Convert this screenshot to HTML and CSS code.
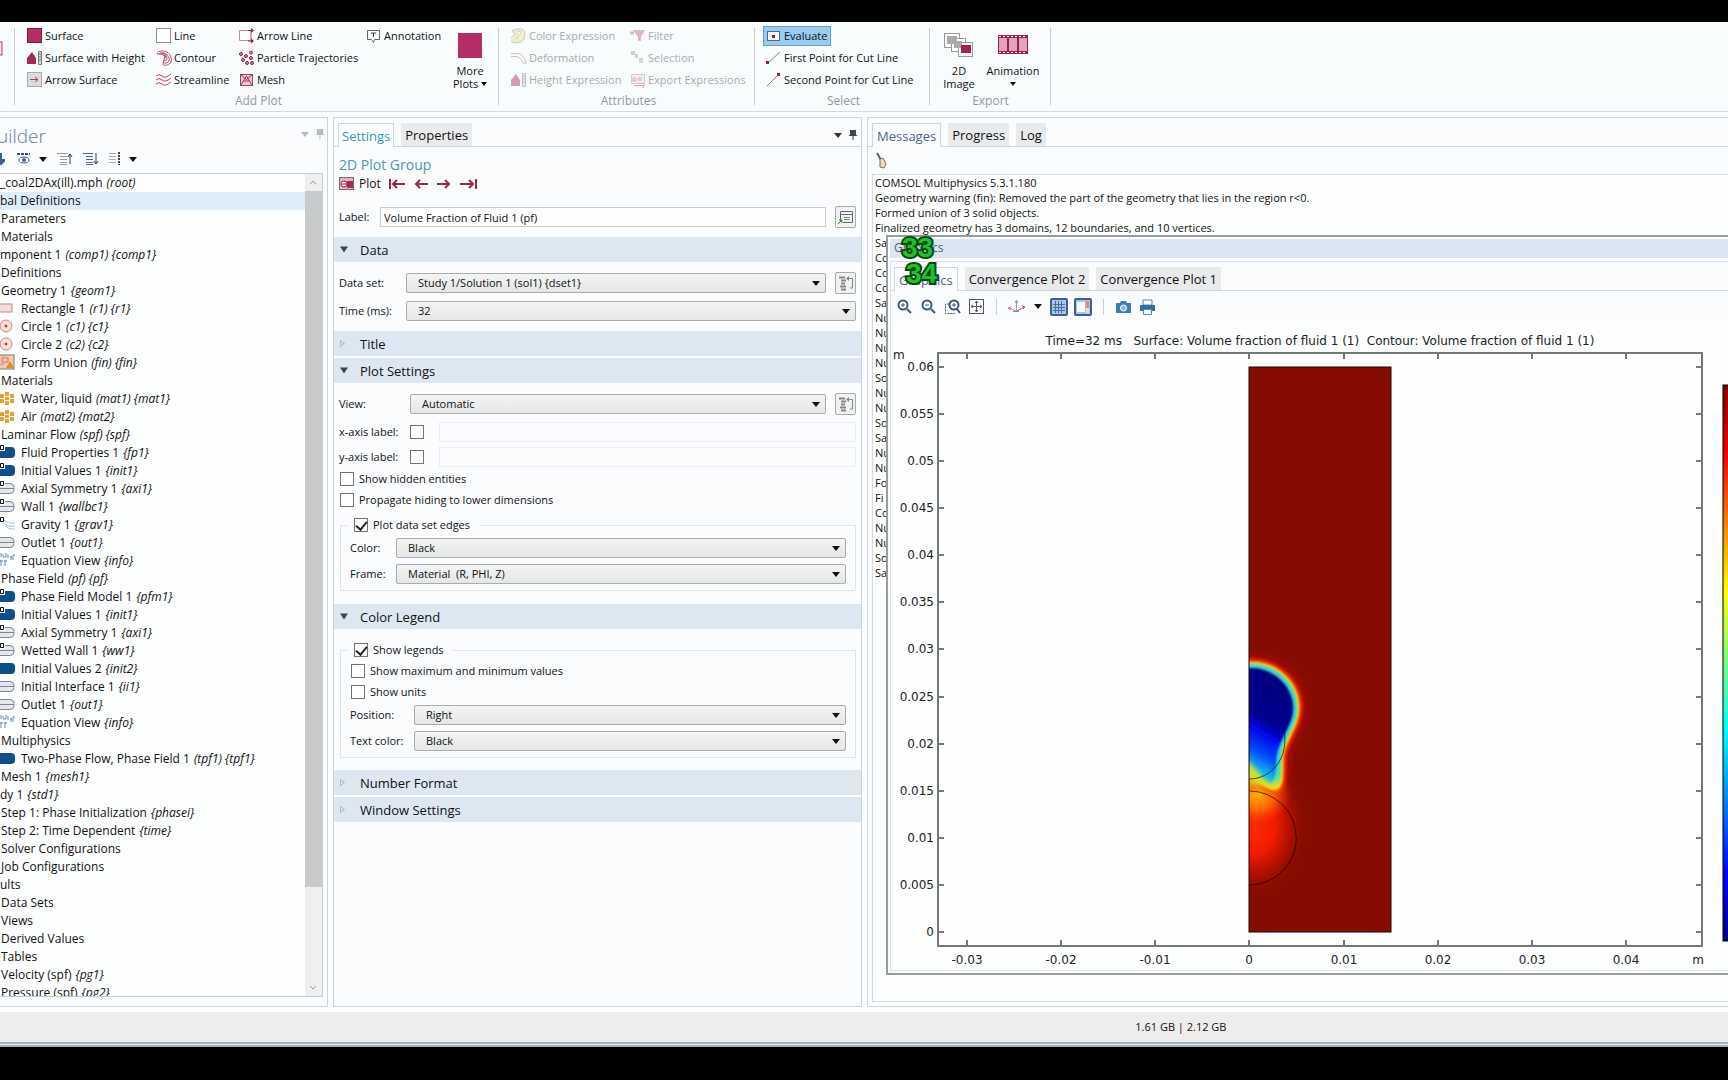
FILE: index.html
```
<!DOCTYPE html>
<html lang="en">
<head>
    <meta charset="utf-8">
    <title>COMSOL Multiphysics</title>
    <link rel="stylesheet" href="styles.css">
</head>
<body>
    <!-- Shared icons -->
    <svg class="defs" width="0" height="0" aria-hidden="true">
        <symbol id="i-dom" viewBox="0 0 16 16"><rect x="-5" y="3" width="20" height="11" rx="4" fill="#0f4f8c"/></symbol>
        <symbol id="i-domd" viewBox="0 0 16 16"><rect x="-5" y="3" width="20" height="11" rx="4" fill="#0f4f8c"/><rect x="-1" y="0" width="6" height="7" fill="#fff"/><path d="M.5 1.500h3v4h-3z" fill="none" stroke="#111"/></symbol>
        <symbol id="i-bnd" viewBox="0 0 16 16"><rect x="-5" y="3.500" width="19" height="10" rx="4" fill="#e6e7ec" stroke="#80858f"/><path d="M0 8.500h14" stroke="#80858f"/></symbol>
        <symbol id="i-bndd" viewBox="0 0 16 16"><rect x="-5" y="3.500" width="19" height="10" rx="4" fill="#e6e7ec" stroke="#80858f"/><path d="M0 8.500h14" stroke="#80858f"/><rect x="-1" y="0" width="6" height="7" fill="#fff"/><path d="M.5 1.500h3v4h-3z" fill="none" stroke="#111"/></symbol>
        <symbol id="i-grav" viewBox="0 0 16 16"><path d="M4 4q4 4 11 3M3 7q4 4 12 3M5 10q4 4 10 3" fill="none" stroke="#a8bfe6"/><path d="M.5 1.500h3v4h-3z" fill="none" stroke="#111"/></symbol>
        <symbol id="i-eq" viewBox="0 0 16 16"><path d="M1 1v4M3 2v3h3v-4M8 2v4M11 8v-4M10 5h2M13 8v-5h2M0 9h3M1 8v6M5 8v6M4 9h3" fill="none" stroke="#6d8cb4"/></symbol>
        <symbol id="i-circ" viewBox="0 0 16 16"><circle cx="6" cy="8" r="6" fill="#f7dcd8" stroke="#c38983"/><circle cx="6" cy="8" r="1" fill="#a03c34" stroke="#a03c34"/></symbol>
        <symbol id="i-mat" viewBox="0 0 16 16"><path d="M0 4h4v4h-4zM0 9h4v4h-4zM5 2h4v4h-4zM5 7h4v3h-4zM5 11h4v4h-4zM10 4h4v4h-4zM10 9h4v4h-4z" fill="#e3a137"/></symbol>
        <symbol id="i-height" viewBox="0 0 16 16"><path d="M5 2L9 8V14H0V8z" fill="#a32b58"/><path d="M11.500 1.500h3v13h-3z" fill="#ddd" stroke="#777"/><path d="M12 4h2M12 7h2M12 10h2" stroke="#777"/></symbol>
        <symbol id="i-goto" viewBox="0 0 16 16"><path d="M1 2.500h6M3 5.500h5M3 8.500h4M2 11.500h6M3 14.500h5" stroke="#858585" stroke-width="2"/><path d="M9 3.500h5.500V13H12" fill="none" stroke="#858585"/><path d="M8 3.500l3-2.500v5z" fill="#858585"/></symbol>
        <symbol id="i-pin" viewBox="0 0 10 12"><path d="M2 1h6v5h1v1h-3.500v4h-1v-4H1v-1h1z" fill="currentColor"/></symbol>
    </svg>

    <header class="ribbon">
        <div class="group edge">
            <svg width="4" height="16"><rect x="-5" y="1" width="7" height="13" fill="#f6e3ea" stroke="#a05068"/></svg>
        </div>

        <div class="group add-plot">
            <div class="tools">
                <div class="tool-col">
                    <button><svg width="16" height="16"><rect x=".5" y=".5" width="14" height="14" fill="#b52d67" stroke="#6d2040"/></svg>Surface</button>
                    <button><svg width="16" height="16"><use href="#i-height"/></svg>Surface with Height</button>
                    <button><svg width="16" height="16"><rect x=".5" y=".5" width="14" height="14" fill="#dcdce0" stroke="#aaa"/><path d="M3 7.500h8M8 5l3 2.500-3 2.500" fill="none" stroke="#b0355f"/></svg>Arrow Surface</button>
                </div>
                <div class="tool-col">
                    <button><svg width="16" height="16"><rect x=".5" y=".5" width="14" height="14" fill="#fff" stroke="#9a8a94"/></svg>Line</button>
                    <button><svg width="16" height="16" fill="none" stroke="#c0527a"><path d="M1 4q0-3 6-3t8 6-4 8-3-5-7-6z"/><path d="M3 4q1-2 5-1t5 5-3 5-1-5-6-4z"/><path d="M7 5q4 0 4 3t-2 3"/></svg>Contour</button>
                    <button><svg width="16" height="16" fill="none" stroke="#b8446c"><path d="M0 4q3-3 6 0t9-2M0 8q3-3 6 0t9-2M0 12q3-3 6 0t9-2"/></svg>Streamline</button>
                </div>
                <div class="tool-col">
                    <button><svg width="16" height="16"><path d="M12 2.500H.5v10H12z" fill="#fff" stroke="#c58aa0"/><path d="M12 3v10" stroke="#c58aa0"/><path d="M9 2.500h4M9 13h4" stroke="#8d2048"/><path d="M12 0l3 2.500-3 2.500zM12 10.500l3 2.500-3 2.500z" fill="#8d2048"/></svg>Arrow Line</button>
                    <button><svg width="16" height="16" fill="#d88ca8" stroke="#8d2048"><circle cx="2" cy="4" r="1.500"/><circle cx="7" cy="6" r="1.500"/><circle cx="12" cy="2.500" r="1.500"/><circle cx="4" cy="10" r="1.500"/><circle cx="12" cy="8" r="1.500"/><circle cx="8" cy="13" r="1.500"/><circle cx="13" cy="13" r="1.500"/></svg>Particle Trajectories</button>
                    <button><svg width="16" height="16"><rect x="1.500" y="2.500" width="12" height="11" fill="#ecc8d4" stroke="#8a4a62"/><path d="M2 3l5.500 4.500L13 3M2 13l5.500-9L13 13M4 9h7" fill="none" stroke="#b0355f"/></svg>Mesh</button>
                </div>
                <div class="tool-col">
                    <button><svg width="16" height="16"><path d="M1.500 2.500h12v9h-5l-1 3-2-3h-4z" fill="#fff" stroke="#666"/><path d="M5 5h5M7.500 5v4" stroke="#444"/></svg>Annotation</button>
                </div>
                <button class="big">
                    <svg width="24" height="25"><rect width="24" height="25" fill="#b52d67"/></svg>
                    <span>More<br>Plots <i class="caret"></i></span>
                </button>
            </div>
            <h3>Add Plot</h3>
        </div>

        <div class="group attributes">
            <div class="tools">
                <div class="tool-col">
                    <button disabled><svg width="16" height="16"><path d="M7 1q7-1 7 5t-4 8-9 0 0-5 1-5 5-3z" fill="#eadf8f" stroke="#888"/><circle cx="8" cy="5" r="2" fill="#fff" stroke="#999"/><circle cx="6" cy="10" r="1.500" fill="#b9c76a"/></svg>Color Expression</button>
                    <button disabled><svg width="16" height="16" fill="none" stroke="#b06a85"><path d="M0 3.500h8q4 1 7 8M0 6.500h6q4 1 6 6l3 1v-3"/></svg>Deformation</button>
                    <button disabled><svg width="16" height="16"><use href="#i-height"/></svg>Height Expression</button>
                </div>
                <div class="tool-col">
                    <button disabled><svg width="16" height="16"><path d="M0 5h4" stroke="#888" stroke-width="3"/><path d="M3 2h12l-4 7v4H8V9z" fill="#b86a86"/></svg>Filter</button>
                    <button disabled><svg width="16" height="16" fill="#999"><path d="M1 1h4v4h-4zM5 4h3v4H5zM9 8h4v5H9z"/><path d="M9 9h4v4H9z" fill="#d5a0b4"/></svg>Selection</button>
                    <button disabled><svg width="16" height="16"><path d="M1.500 2.500h13v9h-13z" fill="#f3dfe6" stroke="#999"/><path d="M3 6h3v3H3zM8 6h4M8 8h4" fill="none" stroke="#a0506c"/><path d="M4 13.500h10M12 11l3 2.500-3 2.500" fill="none" stroke="#a0506c"/></svg>Export Expressions</button>
                </div>
            </div>
            <h3>Attributes</h3>
        </div>

        <div class="group select">
            <div class="tools">
                <div class="tool-col">
                    <button class="active"><svg width="16" height="16"><rect x="1.500" y="3.500" width="12" height="9" fill="#f4f8ff" stroke="#4c6680"/><rect x="6" y="7" width="3" height="3" fill="#8d2048"/></svg>Evaluate</button>
                    <button><svg width="16" height="16"><path d="M2 13L14 2" stroke="#888"/><rect x="0" y="11" width="3" height="3" fill="#8d2048"/></svg>First Point for Cut Line</button>
                    <button><svg width="16" height="16"><path d="M1 14L12 3" stroke="#888"/><rect x="11" y="1" width="3" height="3" fill="#8d2048"/></svg>Second Point for Cut Line</button>
                </div>
            </div>
            <h3>Select</h3>
        </div>

        <div class="group export">
            <div class="tools">
                <button class="big">
                    <svg width="30" height="25"><g fill="#fff" stroke="#999"><rect x=".5" y=".5" width="15" height="14"/><rect x="7.500" y="5.500" width="14" height="13"/><rect x="14.500" y="9.500" width="14" height="14"/></g><path d="M3 3h10v8H3zM10 8h8v7h-8z" fill="#aaa"/><path d="M17 12h10v8H17z" fill="#a32055"/></svg>
                    <span>2D<br>Image</span>
                </button>
                <button class="big">
                    <svg width="30" height="25"><rect y="2" width="30" height="19" fill="#96224f"/><path d="M1 5h8v13H1zM11 5h8v13h-8zM21 5h8v13h-8z" fill="#e3a3bb"/><path d="M1 3.500h28M1 19.500h28" stroke="#fff" stroke-dasharray="2 2"/></svg>
                    <span>Animation<br><i class="caret"></i></span>
                </button>
            </div>
            <h3>Export</h3>
        </div>
    </header>

    <main>
        <!-- Model tree -->
        <section class="panel tree-panel">
            <div class="tree-head">
                <h2>uilder</h2>
                <div class="pins"><i class="caret"></i><svg width="10" height="12"><use href="#i-pin"/></svg></div>
            </div>
            <div class="tree-tools">
                <svg class="down" width="5" height="14"><path d="M1 1v9M-3 8l4 4 4-4z" fill="#3d6289" stroke="#3d6289" stroke-width="2"/></svg>
                <svg width="14" height="14"><path d="M0 2h13" stroke="#446" stroke-dasharray="3 1" stroke-width="2"/><ellipse cx="7" cy="8" rx="5" ry="3" fill="#fff" stroke="#3f6389"/><circle cx="7" cy="8" r="2" fill="#3f6389"/></svg>
                <i class="caret"></i>
                <svg width="16" height="14"><path d="M0 1.500h10M3 4.500h7M3 7.500h7M3 10.500h7M3 12.500h7" stroke="#999"/><path d="M13 12V2M11 5l2-3 2 3" fill="none" stroke="#345"/></svg>
                <svg width="16" height="14"><path d="M0 1.500h10M3 4.500h7M3 7.500h7M3 10.500h7M3 12.500h7" stroke="#4a6a8a"/><path d="M13 1v11M11 9l2 3 2-3" fill="none" stroke="#345"/></svg>
                <svg width="12" height="14"><path d="M0 1.500h7M0 4.500h7M0 7.500h7M0 10.500h7" stroke="#aaa"/><path d="M10 0v13" stroke="#444" stroke-dasharray="2 1" stroke-width="2"/></svg>
                <i class="caret"></i>
            </div>
            <div class="tree-box">
                <ul class="tree">
                    <li class="cut">_coal2DAx(ill).mph <em>(root)</em></li>
                    <li class="cut selected">bal Definitions</li>
                    <li>Parameters</li>
                    <li>Materials</li>
                    <li class="cut">mponent 1 <em>(comp1) {comp1}</em></li>
                    <li>Definitions</li>
                    <li>Geometry 1 <em>{geom1}</em></li>
                    <li class="leaf"><svg><rect x="-3" y="4" width="15" height="8" fill="#f3dede" stroke="#c08a8a"/></svg>Rectangle 1 <em>(r1) {r1}</em></li>
                    <li class="leaf"><svg><use href="#i-circ"/></svg>Circle 1 <em>(c1) {c1}</em></li>
                    <li class="leaf"><svg><use href="#i-circ"/></svg>Circle 2 <em>(c2) {c2}</em></li>
                    <li class="leaf"><svg><rect x="-3" y="1" width="17" height="14" fill="#f6c6b4" stroke="#6a8a6a"/><path d="M2 4h6v4H2zM0 10h4" fill="none" stroke="#d07860"/><path d="M10 7l4 7H6z" fill="#e08a2a"/></svg>Form Union <em>(fin) {fin}</em></li>
                    <li>Materials</li>
                    <li class="leaf"><svg><use href="#i-mat"/></svg>Water, liquid <em>(mat1) {mat1}</em></li>
                    <li class="leaf"><svg><use href="#i-mat"/></svg>Air <em>(mat2) {mat2}</em></li>
                    <li>Laminar Flow <em>(spf) {spf}</em></li>
                    <li class="leaf"><svg><use href="#i-domd"/></svg>Fluid Properties 1 <em>{fp1}</em></li>
                    <li class="leaf"><svg><use href="#i-domd"/></svg>Initial Values 1 <em>{init1}</em></li>
                    <li class="leaf"><svg><use href="#i-bndd"/></svg>Axial Symmetry 1 <em>{axi1}</em></li>
                    <li class="leaf"><svg><use href="#i-bndd"/></svg>Wall 1 <em>{wallbc1}</em></li>
                    <li class="leaf"><svg><use href="#i-grav"/></svg>Gravity 1 <em>{grav1}</em></li>
                    <li class="leaf"><svg><use href="#i-bnd"/></svg>Outlet 1 <em>{out1}</em></li>
                    <li class="leaf"><svg><use href="#i-eq"/></svg>Equation View <em>{info}</em></li>
                    <li>Phase Field <em>(pf) {pf}</em></li>
                    <li class="leaf"><svg><use href="#i-domd"/></svg>Phase Field Model 1 <em>{pfm1}</em></li>
                    <li class="leaf"><svg><use href="#i-domd"/></svg>Initial Values 1 <em>{init1}</em></li>
                    <li class="leaf"><svg><use href="#i-bndd"/></svg>Axial Symmetry 1 <em>{axi1}</em></li>
                    <li class="leaf"><svg><use href="#i-bndd"/></svg>Wetted Wall 1 <em>{ww1}</em></li>
                    <li class="leaf"><svg><use href="#i-dom"/></svg>Initial Values 2 <em>{init2}</em></li>
                    <li class="leaf"><svg><use href="#i-bnd"/></svg>Initial Interface 1 <em>{ii1}</em></li>
                    <li class="leaf"><svg><use href="#i-bnd"/></svg>Outlet 1 <em>{out1}</em></li>
                    <li class="leaf"><svg><use href="#i-eq"/></svg>Equation View <em>{info}</em></li>
                    <li>Multiphysics</li>
                    <li class="leaf"><svg><use href="#i-dom"/></svg>Two-Phase Flow, Phase Field 1 <em>(tpf1) {tpf1}</em></li>
                    <li>Mesh 1 <em>{mesh1}</em></li>
                    <li class="cut">dy 1 <em>{std1}</em></li>
                    <li>Step 1: Phase Initialization <em>{phasei}</em></li>
                    <li>Step 2: Time Dependent <em>{time}</em></li>
                    <li>Solver Configurations</li>
                    <li>Job Configurations</li>
                    <li class="cut">ults</li>
                    <li>Data Sets</li>
                    <li>Views</li>
                    <li>Derived Values</li>
                    <li>Tables</li>
                    <li>Velocity (spf) <em>{pg1}</em></li>
                    <li>Pressure (spf) <em>{pg2}</em></li>
                </ul>
                <div class="scrollbar">
                    <svg width="17" height="17"><path d="M5 10l3-3 3 3" fill="none" stroke="#999"/></svg>
                    <div class="thumb"></div>
                    <svg width="17" height="17"><path d="M5 7l3 3 3-3" fill="none" stroke="#999"/></svg>
                </div>
            </div>
        </section>

        <!-- Settings -->
        <section class="panel settings">
            <div class="tabs">
                <button class="tab current teal">Settings</button>
                <button class="tab">Properties</button>
                <div class="pins dark"><i class="caret"></i><svg width="10" height="12"><use href="#i-pin"/></svg></div>
            </div>
            <h2>2D Plot Group</h2>
            <div class="plot-tools">
                <button><svg width="16" height="14"><rect x=".5" y=".5" width="14" height="12" fill="#e8b4c6" stroke="#7a6a70"/><rect x="8" y="4" width="6" height="7" fill="#a32b58"/><circle cx="5" cy="7" r="3" fill="#fff" stroke="#8d2048"/><path d="M3 7h4" stroke="#8d2048"/></svg>Plot</button>
                <button aria-label="First"><svg class="arrow" width="17" height="10"><path d="M1 0v10M4 5h12M8 1L4 5l4 4"/></svg></button>
                <button aria-label="Previous"><svg class="arrow" width="15" height="10"><path d="M2 5h12M6 1L2 5l4 4"/></svg></button>
                <button aria-label="Next"><svg class="arrow" width="15" height="10"><path d="M0 5h12M8 1l4 4-4 4"/></svg></button>
                <button aria-label="Last"><svg class="arrow" width="17" height="10"><path d="M16 0v10M0 5h12M9 1l4 4-4 4"/></svg></button>
            </div>
            <div class="row label-row">
                <label for="label">Label:</label>
                <input type="text" id="label" value="Volume Fraction of Fluid 1 (pf)">
                <button class="side" aria-label="Rename"><svg width="16" height="16"><path d="M2.500 12V2.500h12v11H5M3 5.500h11" fill="none" stroke="#667"/><path d="M6 8.500h6M6 10.500h6" stroke="#7a9a6a"/><path d="M0 15l4-4M1 11h3v3" fill="none" stroke="#3a7a3a"/></svg></button>
            </div>

            <button class="section open">Data</button>
            <div class="body">
                <div class="row">
                    <label for="dataset" class="w67">Data set:</label>
                    <span class="drop"><select id="dataset"><option>Study 1/Solution 1 (sol1) {dset1}</option></select></span>
                    <button class="side" aria-label="Go to source"><svg width="16" height="16"><use href="#i-goto"/></svg></button>
                </div>
                <div class="row">
                    <label for="time" class="w67">Time (ms):</label>
                    <span class="drop"><select id="time"><option>32</option></select></span>
                </div>
            </div>
            <button class="section">Title</button>
            <button class="section open">Plot Settings</button>
            <div class="body">
                <div class="row">
                    <label for="view" class="w71">View:</label>
                    <span class="drop"><select id="view"><option>Automatic</option></select></span>
                    <button class="side" aria-label="Go to source"><svg width="16" height="16"><use href="#i-goto"/></svg></button>
                </div>
                <div class="row axis">
                    <label for="xaxis" class="w71">x-axis label:</label>
                    <input type="checkbox" id="xaxis"><input type="text" disabled aria-label="x-axis text">
                </div>
                <div class="row axis">
                    <label for="yaxis" class="w71">y-axis label:</label>
                    <input type="checkbox" id="yaxis"><input type="text" disabled aria-label="y-axis text">
                </div>
                <label class="check"><input type="checkbox">Show hidden entities</label>
                <label class="check"><input type="checkbox">Propagate hiding to lower dimensions</label>
                <fieldset>
                    <legend><label class="check"><input type="checkbox" checked>Plot data set edges</label></legend>
                    <div class="row">
                        <label for="color" class="w46">Color:</label>
                        <span class="drop"><select id="color"><option>Black</option></select></span>
                    </div>
                    <div class="row">
                        <label for="frame" class="w46">Frame:</label>
                        <span class="drop"><select id="frame"><option>Material &nbsp;(R, PHI, Z)</option></select></span>
                    </div>
                </fieldset>
            </div>
            <button class="section open">Color Legend</button>
            <div class="body">
                <fieldset>
                    <legend><label class="check"><input type="checkbox" checked>Show legends</label></legend>
                    <label class="check"><input type="checkbox">Show maximum and minimum values</label>
                    <label class="check"><input type="checkbox">Show units</label>
                    <div class="row">
                        <label for="position" class="w64">Position:</label>
                        <span class="drop"><select id="position"><option>Right</option></select></span>
                    </div>
                    <div class="row">
                        <label for="textcolor" class="w64">Text color:</label>
                        <span class="drop"><select id="textcolor"><option>Black</option></select></span>
                    </div>
                </fieldset>
            </div>
            <button class="section">Number Format</button>
            <button class="section">Window Settings</button>
        </section>

        <!-- Messages with the floating graphics window over it -->
        <section class="panel messages">
            <div class="tabs">
                <button class="tab current">Messages</button>
                <button class="tab">Progress</button>
                <button class="tab">Log</button>
            </div>
            <div class="msg-tools">
                <svg width="14" height="18"><path d="M2 1l4 7" stroke="#666" stroke-width="2"/><path d="M5 7l3-1 3 6-2 4-4-1z" fill="#eadfc0" stroke="#776a50"/></svg>
            </div>
            <pre class="log">COMSOL Multiphysics 5.3.1.180
Geometry warning (fin): Removed the part of the geometry that lies in the region r&lt;0.
Formed union of 3 solid objects.
Finalized geometry has 3 domains, 12 boundaries, and 10 vertices.
Sa
Co
Co
Co
Sa
Nu
Nu
Nu
Nu
So
Nu
Nu
So
Sa
Nu
Nu
Fo
Fi
Co
Nu
Nu
So
Sa</pre>

            <div class="window">
                <div class="title">Graphics</div>
                <div class="window-body">
                    <div class="tabs">
                        <button class="tab current">Graphics</button>
                        <button class="tab">Convergence Plot 2</button>
                        <button class="tab">Convergence Plot 1</button>
                    </div>
                    <div class="gfx-tools">
                        <svg width="16" height="16" fill="none" stroke="#3b5878"><circle cx="6" cy="6" r="4.500" stroke-width="2"/><path d="M10 10l4 4" stroke-width="2"/><path d="M4 6h4M6 4v4"/></svg>
                        <svg width="16" height="16" fill="none" stroke="#3b5878"><circle cx="6" cy="6" r="4.500" stroke-width="2"/><path d="M10 10l4 4" stroke-width="2"/><path d="M4 6h4"/></svg>
                        <svg width="16" height="16" fill="none" stroke="#3b5878"><path d="M4 5H.5v9.500H10" stroke-dasharray="2 1"/><circle cx="9" cy="6" r="4.500" stroke-width="2"/><path d="M12 10l3 4" stroke-width="2"/><path d="M7 6h4M9 4v4"/></svg>
                        <svg width="16" height="16" fill="none" stroke="#556"><rect x=".5" y=".5" width="14" height="14"/><path d="M7.500 2v11M2 7.500h11M6 4l1.500-2L9 4M6 11l1.500 2L9 11M4 6L2 7.500 4 9M11 6l2 1.500L11 9"/></svg>
                        <i class="rule"></i>
                        <svg width="18" height="16" fill="none"><path d="M8.500 12V2M7 4l1.500-3L10 4" stroke="#7fa0cc"/><path d="M8 12L1 9M3 8L0 9l2 2" stroke="#c67a86"/><path d="M9 12l7-4M14 7l3 1-2 2" stroke="#c0566a"/><path d="M5 12.500h6" stroke="#889"/></svg>
                        <i class="caret"></i>
                        <svg class="on" width="18" height="18"><rect x="1" y="1" width="16" height="16" rx="1" fill="#a7c4ea" stroke="#3f608a" stroke-width="2"/><path d="M5.500 3v12M8.500 3v12M11.500 3v12M3 6.500h12M3 9.500h12M3 12.500h12" stroke="#4f7098"/></svg>
                        <svg class="on" width="18" height="18"><rect x="1" y="1" width="16" height="16" rx="1" fill="#a7c4ea" stroke="#3f608a" stroke-width="2"/><rect x="3" y="4" width="8" height="10" fill="#f6f8fb"/><path d="M12 3h3v12h-3z" fill="#e08a72"/><path d="M12 10h3v5h-3z" fill="#eedfc0"/></svg>
                        <i class="rule"></i>
                        <svg class="on" width="17" height="16"><path d="M1 4h4l1-2h5l1 2h4v10H1z" fill="#3f7db8"/><circle cx="8.500" cy="9" r="3" fill="#8bb7e0" stroke="#fff"/></svg>
                        <svg width="16" height="16"><path d="M3 1h9v5H3z" fill="#fff" stroke="#5588b8"/><path d="M0 6h15v6H0z" fill="#2f6ca8"/><path d="M3.500 10.500h8v5h-8z" fill="#fff" stroke="#5588b8"/></svg>
                    </div>
                    <svg class="plot" viewBox="0 0 837 648" preserveAspectRatio="xMinYMin slice">
                        <defs>
                            <linearGradient id="bubble" x1=".55" y1="0" x2=".25" y2="1">
                                <stop offset="0" stop-color="#00007c"/>
                                <stop offset=".42" stop-color="#000090"/>
                                <stop offset=".54" stop-color="#0008e8"/>
                                <stop offset=".7" stop-color="#0048ff"/>
                                <stop offset=".86" stop-color="#10b8f0"/>
                                <stop offset="1" stop-color="#60e0a0" stop-opacity="0"/>
                            </linearGradient>
                            <linearGradient id="rim" x1="0" y1="0" x2="0" y2="1">
                                <stop offset=".75" stop-color="#30d8e0"/>
                                <stop offset=".9" stop-color="#50e0b0"/>
                                <stop offset="1" stop-color="#f0e010"/>
                            </linearGradient>
                            <radialGradient id="heat">
                                <stop offset="0" stop-color="#ff2a00"/>
                                <stop offset=".4" stop-color="#f01c00"/>
                                <stop offset=".7" stop-color="#b81000" stop-opacity=".8"/>
                                <stop offset="1" stop-color="#850d00" stop-opacity="0"/>
                            </radialGradient>
                            <radialGradient id="warm">
                                <stop offset="0" stop-color="#ffb000"/>
                                <stop offset=".5" stop-color="#ff7800" stop-opacity=".8"/>
                                <stop offset="1" stop-color="#ff3000" stop-opacity="0"/>
                            </radialGradient>
                            <linearGradient id="jet" x1="0" y1="0" x2="0" y2="1">
                                <stop offset="0" stop-color="#800000"/>
                                <stop offset=".12" stop-color="#f00000"/>
                                <stop offset=".37" stop-color="#ffff00"/>
                                <stop offset=".62" stop-color="#00ffff"/>
                                <stop offset=".88" stop-color="#0000ff"/>
                                <stop offset="1" stop-color="#000080"/>
                            </linearGradient>
                            <filter id="soft" x="-30%" y="-30%" width="160%" height="160%"><feGaussianBlur stdDeviation="6"/></filter>
                            <filter id="softer" x="-30%" y="-30%" width="160%" height="160%"><feGaussianBlur stdDeviation="12"/></filter>
                            <filter id="edge"><feGaussianBlur stdDeviation="3"/></filter>
                            <clipPath id="domain"><rect x="358" y="45" width="142" height="565"/></clipPath>
                            <path id="blob" d="M40 72H95C170 72 232 130 232 205C232 260 188 300 184 350C182 400 188 440 164 445C140 446 120 415 90 405H40z"/>
                        </defs>
                        <text x="429" y="23" text-anchor="middle" xml:space="preserve">Time=32 ms   Surface: Volume fraction of fluid 1 (1)  Contour: Volume fraction of fluid 1 (1)</text>
                        <text x="2" y="37">m</text>
                        <rect class="frame" x="47" y="31" width="764" height="593"/>
                        <path class="frame" d="M76 31v6M170 31v6M264 31v6M358 31v6M453 31v6M547 31v6M641 31v6M735 31v6M76 624v-6M170 624v-6M264 624v-6M358 624v-6M453 624v-6M547 624v-6M641 624v-6M735 624v-6"/>
                        <path class="frame" d="M47 45h6M47 92h6M47 139h6M47 186h6M47 233h6M47 280h6M47 327h6M47 375h6M47 422h6M47 469h6M47 516h6M47 563h6M47 610h6M811 45h-6M811 92h-6M811 139h-6M811 186h-6M811 233h-6M811 280h-6M811 327h-6M811 375h-6M811 422h-6M811 469h-6M811 516h-6M811 563h-6M811 610h-6"/>
                        <g text-anchor="end">
                            <text x="43" y="49">0.06</text>
                            <text x="43" y="96">0.055</text>
                            <text x="43" y="143">0.05</text>
                            <text x="43" y="190">0.045</text>
                            <text x="43" y="237">0.04</text>
                            <text x="43" y="284">0.035</text>
                            <text x="43" y="331">0.03</text>
                            <text x="43" y="379">0.025</text>
                            <text x="43" y="426">0.02</text>
                            <text x="43" y="473">0.015</text>
                            <text x="43" y="520">0.01</text>
                            <text x="43" y="567">0.005</text>
                            <text x="43" y="614">0</text>
                        </g>
                        <g text-anchor="middle">
                            <text x="76" y="642">-0.03</text>
                            <text x="170" y="642">-0.02</text>
                            <text x="264" y="642">-0.01</text>
                            <text x="358" y="642">0</text>
                            <text x="453" y="642">0.01</text>
                            <text x="547" y="642">0.02</text>
                            <text x="641" y="642">0.03</text>
                            <text x="735" y="642">0.04</text>
                            <text x="807" y="642">m</text>
                        </g>
                        <rect x="358" y="45" width="142" height="565" fill="#850d00"/>
                        <g clip-path="url(#domain)">
                            <g transform="translate(329 318) scale(.33333)">
                                <ellipse cx="100" cy="560" rx="165" ry="210" fill="url(#heat)"/>
                                <use href="#blob" fill="#e01000" stroke="#e01000" stroke-width="34" filter="url(#softer)"/>
                                <ellipse cx="110" cy="465" rx="105" ry="90" fill="url(#warm)"/>
                                <use href="#blob" fill="none" stroke="#ff4800" stroke-width="22" filter="url(#soft)"/>
                                <use href="#blob" fill="#ffd800" stroke="#ffd800" stroke-width="13" filter="url(#edge)"/>
                                <use href="#blob" fill="url(#rim)" filter="url(#edge)"/>
                                <path d="M40 84H95C160 84 220 138 220 205C220 255 178 296 170 350C166 390 170 420 152 428C130 420 112 396 90 386H40z" fill="url(#bubble)" filter="url(#edge)"/>
                                <path d="M80 362Q120 390 140 440L80 430z" fill="#d8e020" filter="url(#soft)" opacity=".9"/>
                                <g fill="none" stroke="#000" stroke-opacity=".65" stroke-width="3">
                                    <path d="M88 453A141 141 0 0 1 88 735"/>
                                    <path d="M193 275C206 360 150 417 88 417"/>
                                </g>
                            </g>
                        </g>
                        <rect x="358" y="45" width="142" height="565" fill="none" stroke="#200"/>
                        <rect x="832" y="63" width="30" height="556" fill="url(#jet)" stroke="#000"/>
                    </svg>
                </div>
                <div class="counter"><b>33</b><b>34</b></div>
            </div>
        </section>
    </main>

    <footer class="status">1.61 GB | 2.12 GB</footer>
</body>
</html>
```
FILE: styles.css
```
* {
    box-sizing: border-box;
    margin: 0;
    padding: 0;
}

body {
    display: flex;
    flex-direction: column;
    height: 100vh;
    padding: 22px 0 33px;
    overflow: hidden;
    background: #000;
    color: #111;
    font: 11px/18px "Open Sans", "Noto Sans", sans-serif;
}

.defs {
    position: absolute;
}

button, input, select {
    border: none;
    background: none;
    color: inherit;
    font: inherit;
}

h2, h3 {
    font-weight: normal;
}

.caret {
    display: inline-block;
    border: 4px solid transparent;
    border-top: 5px solid #111;
    border-bottom: none;
}

/* Ribbon */
.ribbon {
    display: flex;
    flex: none;
    padding-top: 3px;
    background: #f9fcfd;
    border-bottom: 1px solid #d3dae2;
}

.group {
    position: relative;
    padding-left: 12px;
}

.group::after {
    content: "";
    position: absolute;
    top: 3px;
    right: 0;
    bottom: 6px;
    width: 1px;
    background: #c8cdd6;
}

.edge {
    width: 15px;
    padding: 16px 0 0;
}

.add-plot { width: 484px; }
.attributes { width: 256px; }
.select { width: 175px; padding-left: 8px; }
.export { width: 121px; padding-left: 6px; }

.group h3 {
    margin-left: -9px;
    color: #96999e;
    font-size: 12px;
    line-height: 20px;
    text-align: center;
}

.select h3, .export h3 {
    margin-left: -6px;
}

.tools {
    display: flex;
    height: 66px;
}

.tool-col {
    display: flex;
    flex-direction: column;
    align-items: flex-start;
}

.tool-col button {
    display: flex;
    align-items: center;
    gap: 2px;
    height: 22px;
    white-space: nowrap;
}

.add-plot .tool-col:nth-child(1) { width: 129px; }
.add-plot .tool-col:nth-child(2) { width: 83px; }
.add-plot .tool-col:nth-child(3) { width: 127px; }
.add-plot .tool-col:nth-child(4) { width: 87px; }
.attributes .tool-col:nth-child(1) { width: 119px; }

.select .tool-col button {
    padding: 0 3px;
}

.select .tool-col .active {
    height: 20px;
    margin: 1px 0;
    padding: 0 3px 0 2px;
    background: #98ccf4;
    border: 1px solid #6c9cc4;
}

button:disabled {
    color: #a9abae;
}

button:disabled svg {
    opacity: .45;
}

.big {
    display: flex;
    flex-direction: column;
    align-items: center;
    min-width: 34px;
    padding-top: 8px;
    line-height: 13px;
    white-space: nowrap;
}

.big svg {
    margin-bottom: 6px;
}

.big .caret {
    border-width: 3px;
    border-top-width: 4px;
    border-bottom: none;
    vertical-align: 2px;
}

.export .big {
    width: 46px;
}

.export .big + .big {
    width: 62px;
}

/* Panels */
main {
    display: grid;
    grid-template-columns: 328px 529px 1fr;
    gap: 5px;
    flex: 1;
    min-height: 0;
    padding: 5px 0;
    background: #fcfdff;
}

.panel {
    min-width: 0;
    border: 1px solid #ccd4de;
    background: #fafcfe;
}

.tree-panel {
    display: flex;
    flex-direction: column;
    min-height: 0;
    border-left: none;
}

.tree-head {
    display: flex;
    justify-content: space-between;
    height: 34px;
    padding: 3px 2px 0 0;
}

.tree-head h2 {
    margin-left: -3px;
    color: #66809c;
    font-size: 19px;
    line-height: 30px;
    font-weight: 300;
}

.pins {
    display: flex;
    align-items: center;
    gap: 6px;
    height: 26px;
    color: #b4bac0;
}

.pins .caret {
    border-top-color: #b4bac0;
}

.dark {
    height: 24px;
    margin-left: auto;
    color: #444;
}

.dark .caret {
    border-top-color: #333;
}

.tree-tools {
    display: flex;
    gap: 10px;
    align-items: flex-start;
    height: 21px;
}

.tree-tools .down {
    margin-right: 2px;
}

.tree-tools .caret {
    margin: 5px 0 0 -2px;
}

.tree-box {
    display: flex;
    flex: 1;
    min-height: 0;
    margin: 0 4px 9px 0;
    border: 1px solid #c5ccd4;
    border-left: none;
    background: #fdfefe;
}

.tree {
    flex: 1;
    overflow: hidden;
    list-style: none;
    font-size: 12px;
    white-space: nowrap;
}

.tree li {
    display: flex;
    gap: 4px;
    height: 18px;
    padding-left: 1px;
}

.tree .cut {
    padding-left: 0;
}

.tree .selected {
    background: #dfecf9;
}

.tree svg {
    width: 16px;
    height: 16px;
    margin: 0 1px 0 -1px;
}

.scrollbar {
    display: flex;
    flex-direction: column;
    width: 17px;
    background: #eeeff0;
}

.thumb {
    height: 696px;
    margin-bottom: auto;
    background: #c8c9ca;
}

/* Tabs */
.tabs {
    display: flex;
    gap: 7px;
    padding: 5px 3px 0 4px;
    height: 29px;
    border-bottom: 1px solid #d2d8de;
}

.tab {
    height: 23px;
    padding: 0 4px;
    background: #e9eaec;
    font-size: 13px;
}

.tab.current {
    height: 24px;
    background: #fbfdff;
    border: 1px solid #ccd9e4;
    border-bottom: none;
    color: #4a6488;
}

.tab.teal {
    padding: 0 3px;
    color: #3c93b4;
}

/* Settings */
.settings h2 {
    margin: 9px 5px 0;
    color: #5296b0;
    font-size: 14px;
    line-height: 18px;
}

.plot-tools {
    display: flex;
    gap: 8px;
    height: 18px;
    margin: 1px 5px 13px;
}

.plot-tools button {
    display: flex;
    align-items: center;
    gap: 4px;
}

.plot-tools button:first-child {
    font-size: 12px;
}

.arrow {
    fill: none;
    stroke: #96284e;
    stroke-width: 2;
}

.row {
    display: flex;
    align-items: center;
    gap: 9px;
    height: 22px;
}

.label-row {
    margin: 0 5px 9px;
}

.label-row label {
    width: 32px;
}

.row label, .check {
    white-space: nowrap;
}

.row input[type=text] {
    flex: 1;
    min-width: 0;
    height: 20px;
    padding: 0 3px;
    border: 1px solid #c9cdd2;
    background: #fefefe;
}

.row input[type=text]:disabled {
    border-color: #eceef1;
    background: #fbfcfd;
}

.side {
    display: grid;
    place-items: center;
    width: 21px;
    height: 22px;
    border: 1px solid #a9abad;
    border-radius: 2px;
    background: #f1f2f2;
}

.section {
    display: flex;
    align-items: center;
    width: 100%;
    height: 25px;
    margin-bottom: 2px;
    padding-left: 6px;
    background: #dde7f1;
    font-size: 13px;
}

.section::before {
    content: "";
    width: 20px;
    height: 8px;
    background: #b3bcc6;
    clip-path: polygon(0 0, 5px 4px, 0 8px, 0 7px, 3px 4px, 1px 2px, 1px 7px, 0 8px);
}

.section.open::before {
    background: #3b4652;
    clip-path: polygon(0 1px, 8px 1px, 4px 7px);
}

.body {
    display: grid;
    padding: 8px 5px 9px;
}

.body > .row + .row {
    margin-top: 6px;
}

.body > .axis + .axis {
    margin-top: 3px;
}

.w46, .w64, .w67, .w71 {
    flex: none;
}

.w46 { width: 37px; }
.w64 { width: 55px; }
.w67 { width: 58px; }
.w71 { width: 62px; }

.drop {
    position: relative;
    flex: 1;
}

.drop::after {
    content: "";
    position: absolute;
    top: 8px;
    right: 6px;
    border: 4px solid transparent;
    border-top: 5px solid #111;
    border-bottom: none;
    pointer-events: none;
}

select {
    display: block;
    width: 100%;
    height: 20px;
    padding: 0 20px 0 11px;
    appearance: none;
    border: 1px solid #a9abae;
    border-radius: 2px;
    background: linear-gradient(#f3f4f4, #e5e6e6);
}

input[type=checkbox] {
    flex: none;
    display: grid;
    place-items: center;
    width: 14px;
    height: 14px;
    appearance: none;
    border: 1px solid #70757a;
    background: #fff;
}

input[type=checkbox]:checked::before {
    content: "";
    width: 5px;
    height: 9px;
    margin-bottom: 2px;
    border: solid #222;
    border-width: 0 2px 2px 0;
    transform: rotate(40deg);
}

.axis input[type=text] {
    margin-left: 6px;
}

.check {
    display: flex;
    align-items: center;
    gap: 5px;
    height: 21px;
    padding-left: 1px;
}

fieldset {
    display: grid;
    gap: 4px;
    margin: 6px 0 4px 1px;
    padding: 3px 9px 5px;
    border: 1px solid #e0e3e7;
    min-width: 0;
}

fieldset:only-child {
    margin: 2px 0 3px 1px;
}

fieldset .check {
    height: 17px;
}

legend {
    margin-left: -3px;
    padding: 0 9px 0 6px;
}

legend .check {
    height: 18px;
}

/* Messages */
.messages {
    position: relative;
    display: flex;
    flex-direction: column;
    border-right: none;
}

.msg-tools {
    height: 27px;
    padding: 5px 7px;
}

.log {
    flex: 1;
    margin: 0 0 4px 4px;
    padding: 0 2px;
    border: 1px solid #d5dae0;
    border-right: none;
    background: #fdfefe;
    font: inherit;
    line-height: 15px;
}

/* Floating graphics window */
.window {
    position: absolute;
    top: 117px;
    left: 18px;
    right: 0;
    padding: 2px 0 2px 2px;
    border: 2px solid #9a9d9f;
    border-right: none;
    background: #fafcfe;
}

.title {
    height: 19px;
    padding-left: 4px;
    background: #dce6f2;
    color: #4a6488;
    font-size: 12px;
}

.window-body {
    margin-top: 3px;
    border: 1px solid #dfe1e5;
    border-right: none;
}

.window .tabs {
    padding-left: 3px;
}

.gfx-tools {
    display: flex;
    align-items: center;
    gap: 8px;
    height: 31px;
    padding-left: 6px;
}

.gfx-tools .rule {
    width: 1px;
    height: 16px;
    margin: 0 3px;
    background: #ccd0d4;
}

.gfx-tools .on + .on {
    margin-left: -2px;
}

.plot {
    display: block;
    width: 100%;
    background: #fdfefe;
    font-family: "DejaVu Sans", sans-serif;
    font-size: 12px;
    fill: #222;
}

.frame {
    fill: none;
    stroke: #777;
    stroke-width: 2;
}

/* Frame rate readout drawn over the window */
.counter {
    position: absolute;
    top: -2px;
    left: 14px;
    display: grid;
    color: #1fbf2f;
    font: bold 28px/26px "Liberation Sans", sans-serif;
    -webkit-text-stroke: 4px #064a0c;
    paint-order: stroke fill;
}

.counter b + b {
    margin-left: 4px;
}

.status {
    flex: none;
    height: 35px;
    padding-left: 65.7%;
    border-bottom: 5px double #9fb6bd;
    background: #efedec;
    line-height: 30px;
}
```
